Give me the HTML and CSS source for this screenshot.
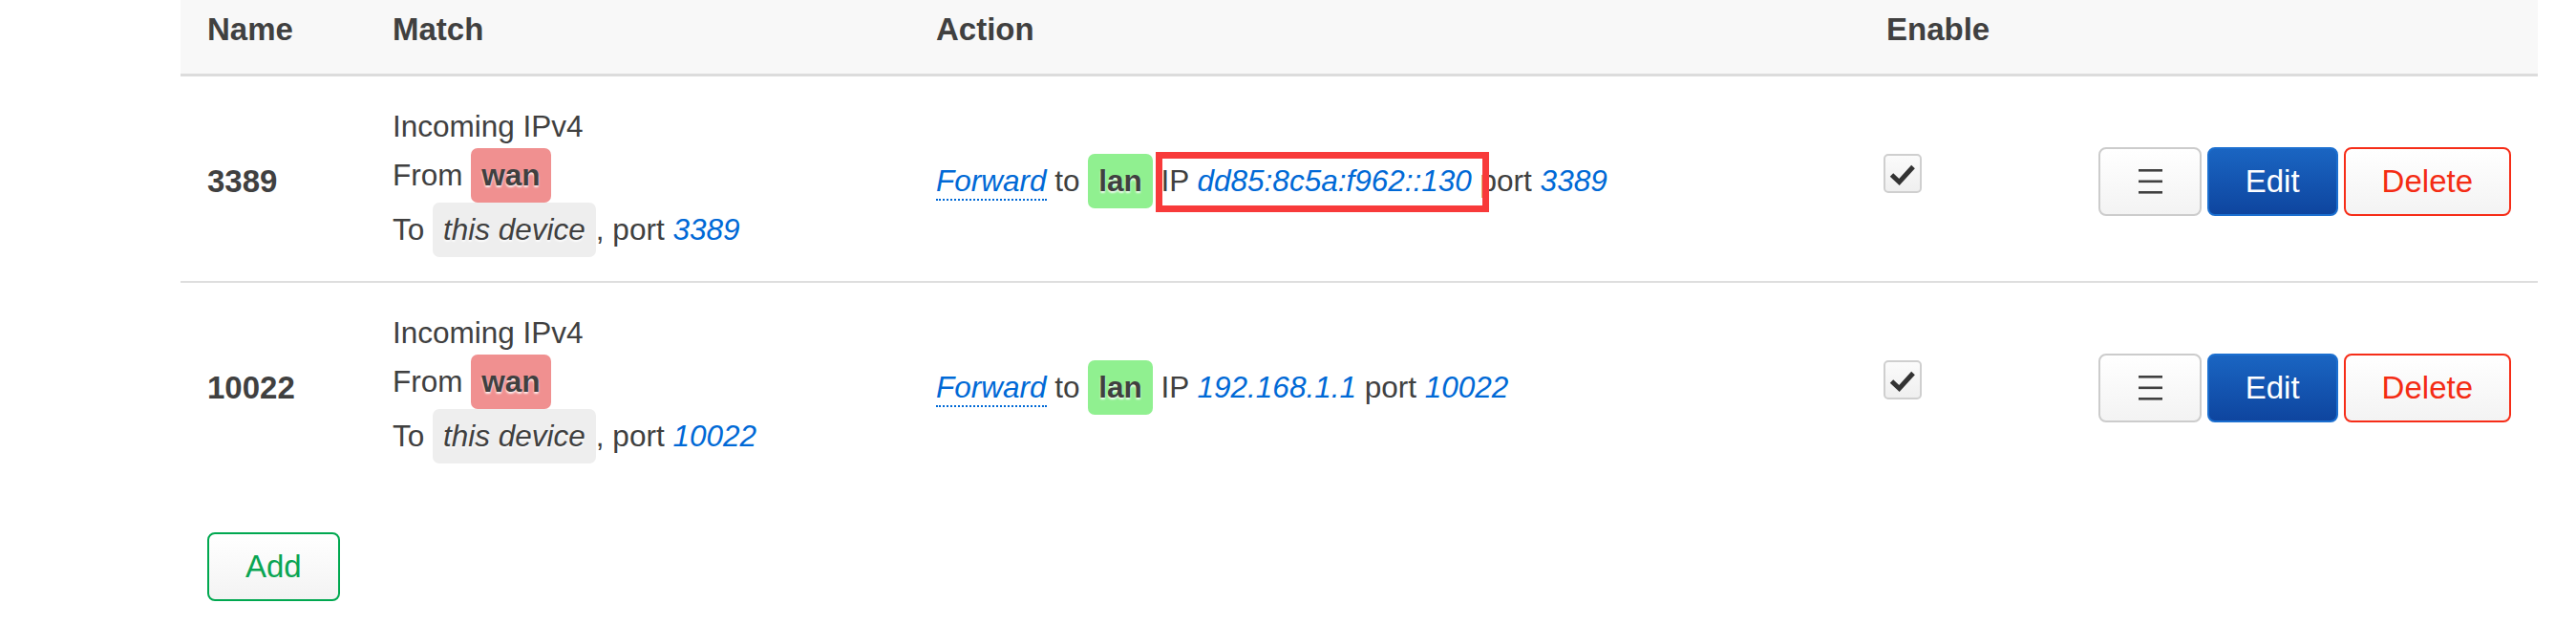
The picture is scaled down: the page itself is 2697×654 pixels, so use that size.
FILE: index.html
```html
<!DOCTYPE html>
<html lang="en">
<head>
<meta charset="utf-8">
<title>Port Forwards</title>
<link rel="stylesheet" href="styles.css">
</head>
<body>
<div class="page">
  <table class="rules">
    <colgroup>
      <col class="c-name"><col class="c-match"><col class="c-action"><col class="c-enable"><col class="c-actions">
    </colgroup>
    <thead>
      <tr><th>Name</th><th>Match</th><th>Action</th><th>Enable</th><th></th></tr>
    </thead>
    <tbody>
      <tr>
        <td class="name">3389</td>
        <td class="match">
          <div>Incoming IPv4</div>
          <div>From <span class="zone wan">wan</span></div>
          <div>To <span class="dev">this device</span>, port <var>3389</var></div>
        </td>
        <td class="action"><span class="fwd">Forward</span> to <span class="zone lan">lan</span> <span class="mark">IP <var>dd85:8c5a:f962::130</var></span> port <var>3389</var></td>
        <td class="enable"><span class="cbx"><svg viewBox="0 0 40 41" width="40" height="41"><path d="M8.5 22 L16.5 29.5 L31 13.5" fill="none" stroke="#333" stroke-width="5"/></svg></span></td>
        <td class="ops">
          <div class="btns">
            <button class="btn menu" aria-label="Drag"><svg viewBox="0 0 25 26" width="25" height="26"><rect x="0" y="0" width="25" height="2.6" fill="#404040"/><rect x="0" y="11.5" width="25" height="2.6" fill="#404040"/><rect x="0" y="23" width="25" height="2.6" fill="#404040"/></svg></button>
            <button class="btn edit">Edit</button>
            <button class="btn del">Delete</button>
          </div>
        </td>
      </tr>
      <tr>
        <td class="name">10022</td>
        <td class="match">
          <div>Incoming IPv4</div>
          <div>From <span class="zone wan">wan</span></div>
          <div>To <span class="dev">this device</span>, port <var>10022</var></div>
        </td>
        <td class="action"><span class="fwd">Forward</span> to <span class="zone lan">lan</span> IP <var>192.168.1.1</var> port <var>10022</var></td>
        <td class="enable"><span class="cbx"><svg viewBox="0 0 40 41" width="40" height="41"><path d="M8.5 22 L16.5 29.5 L31 13.5" fill="none" stroke="#333" stroke-width="5"/></svg></span></td>
        <td class="ops">
          <div class="btns">
            <button class="btn menu" aria-label="Drag"><svg viewBox="0 0 25 26" width="25" height="26"><rect x="0" y="0" width="25" height="2.6" fill="#404040"/><rect x="0" y="11.5" width="25" height="2.6" fill="#404040"/><rect x="0" y="23" width="25" height="2.6" fill="#404040"/></svg></button>
            <button class="btn edit">Edit</button>
            <button class="btn del">Delete</button>
          </div>
        </td>
      </tr>
    </tbody>
  </table>
  <div class="add-row">
    <button class="btn add">Add</button>
  </div>
</div>
</body>
</html>
```
FILE: styles.css
```css
html, body {
  margin: 0;
  background: #fff;
}
body {
  font-family: "Liberation Sans", Arial, sans-serif;
  font-size: 31.5px;
  line-height: 45px;
  color: #404040;
}
.page {
  padding: 0 40px 0 189px;
}
.rules {
  width: 100%;
  table-layout: fixed;
  border-collapse: separate;
  border-spacing: 0;
}
.c-name { width: 194px; }
.c-match { width: 569px; }
.c-action { width: 995px; }
.c-enable { width: 218px; }

.rules th {
  text-align: left;
  font-size: 33px;
  font-weight: bold;
  line-height: 44px;
  padding: 9px 28px 24px;
  background: #f8f8f8;
  border-bottom: 3px solid #dcdcdc;
}
.rules td {
  padding: 30px 28px 25px;
  vertical-align: middle;
}
.rules tbody tr:first-child td {
  border-bottom: 2px solid #dedede;
}
.name {
  font-size: 33px;
  font-weight: bold;
}
var {
  font-style: italic;
  color: #0069d6;
}
.zone {
  display: inline-block;
  padding: 6px 11px;
  border-radius: 7px;
  font-weight: bold;
  text-shadow: 0 2px 2px rgba(255, 255, 255, 0.85);
}
.wan { background: #f09090; }
.lan { background: #90f090; }
.dev {
  display: inline-block;
  padding: 6px 11px;
  border-radius: 7px;
  background: #eeeeee;
  font-style: italic;
  text-shadow: 0 2px 2px rgba(255, 255, 255, 0.85);
}
.fwd {
  font-style: italic;
  color: #0069d6;
  border-bottom: 2px dotted #0069d6;
  padding-bottom: 1px;
}
.mark {
  position: relative;
}
.mark::after {
  content: "";
  position: absolute;
  left: -6px;
  right: -18px;
  top: -12px;
  bottom: -15px;
  border: 7px solid #f83a3a;
  pointer-events: none;
}
.cbx {
  display: block;
  width: 40px;
  height: 41px;
  margin: 0 0 16px -3px;
  box-sizing: border-box;
  border: 2px solid #cfcfcf;
  border-radius: 5px;
  background: linear-gradient(#fbfbfb, #efefef);
}
.cbx svg {
  display: block;
  margin: -2px;
}
.btns {
  display: flex;
  justify-content: flex-end;
  gap: 6px;
}
.btn {
  font-family: inherit;
  font-size: 33px;
  line-height: 44px;
  padding: 12px 38px;
  border: 2px solid #cccccc;
  border-radius: 8px;
  background: linear-gradient(#ffffff, #f3f3f3);
  color: #404040;
  margin: 0;
}
.btn.menu {
  padding-left: 40px;
  padding-right: 39px;
}
.btn.menu svg {
  display: block;
  margin: 9px 0;
}
.btn.edit {
  color: #ffffff;
  border-color: #1b6fd0;
  background: linear-gradient(#1a65c2, #0e459f);
}
.btn.del {
  color: #f42c14;
  border-color: #f62d18;
}
.add-row {
  margin-top: 47px;
  padding-left: 28px;
}
.btn.add {
  color: #0aa553;
  border-color: #00a850;
  padding: 12px 38px;
}
```
